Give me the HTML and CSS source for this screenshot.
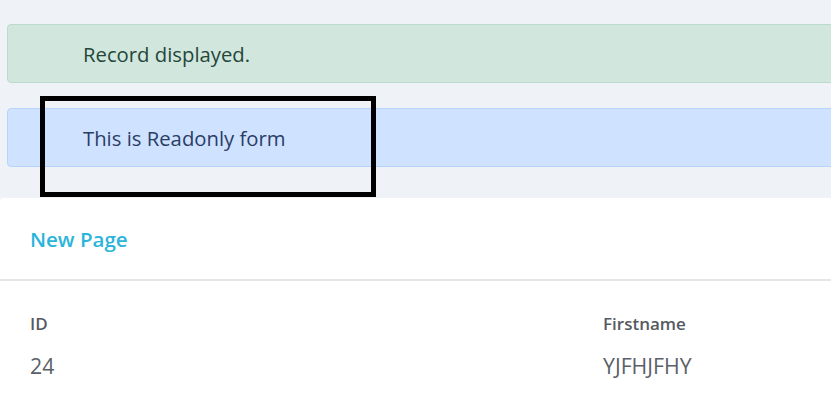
FILE: index.html
```html
<!DOCTYPE html>
<html lang="en">
  <head>
    <meta charset="UTF-8" />
    <meta name="viewport" content="width=device-width, initial-scale=1.0" />
    <title>New Page - Readonly</title>
    <link rel="stylesheet" href="styles.css">
  </head>
  <body>
    <div class="page">
      <!-- Messages -->
      <div class="messages">
        <div class="alert alert-success">Record displayed.</div>
        <div class="alert alert-info">This is Readonly form</div>
      </div>

      <!-- Highlight box -->
      <div class="highlight"></div>

      <!-- Record card -->
      <div class="card">
        <div class="card-header">
          <h2 class="card-title">New Page</h2>
        </div>
        <div class="card-body">
          <div class="field">
            <label>ID</label>
            <span class="value">24</span>
          </div>
          <div class="field">
            <label>Firstname</label>
            <span class="value">YJFHJFHY</span>
          </div>
        </div>
      </div>
    </div>
  </body>
</html>
```

FILE: styles.css
```css
/* Base styles */
* {
  margin: 0;
  padding: 0;
  box-sizing: border-box;
}

body {
  font-family: "Open Sans", "Noto Sans", sans-serif;
  background-color: #eff3f7;
  color: #555;
  overflow: hidden;
}

.page {
  position: relative;
  width: 831px;
  min-height: 397px;
}

/* Messages */
.messages {
  display: flex;
  flex-direction: column;
  gap: 25px;
  padding: 24px 0 31px 7px;
  margin-right: -40px;
}

.alert {
  height: 59px;
  display: flex;
  align-items: center;
  padding-left: 75px;
  font-size: 20.3px;
  border: 1px solid transparent;
  border-radius: 4px;
}

.alert-success {
  background-color: #d1e7dd;
  border-color: #badbcc;
  color: #24463a;
}

.alert-info {
  background-color: #cfe2ff;
  border-color: #b6d4fe;
  color: #2a3d66;
}

/* Annotation box */
.highlight {
  position: absolute;
  top: 96px;
  left: 40px;
  width: 336px;
  height: 101px;
  border: 5px solid #000;
}

/* Card */
.card {
  background-color: #fff;
  border-radius: 4px 4px 0 0;
  margin-right: -40px;
  min-height: 199px;
}

.card-header {
  height: 83px;
  display: flex;
  align-items: center;
  padding: 0 30px;
  border-bottom: 2px solid #e5e6e8;
}

.card-title {
  font-size: 20.5px;
  font-weight: 600;
  color: #2bb5d8;
}

.card-body {
  display: grid;
  grid-template-columns: 573px 1fr;
  padding: 31px 30px 0;
}

.field {
  display: flex;
  flex-direction: column;
  gap: 16px;
}

.field label {
  font-size: 17px;
  font-weight: 600;
  color: #555a62;
}

.field .value {
  font-size: 21.3px;
  color: #5a6068;
}
```
